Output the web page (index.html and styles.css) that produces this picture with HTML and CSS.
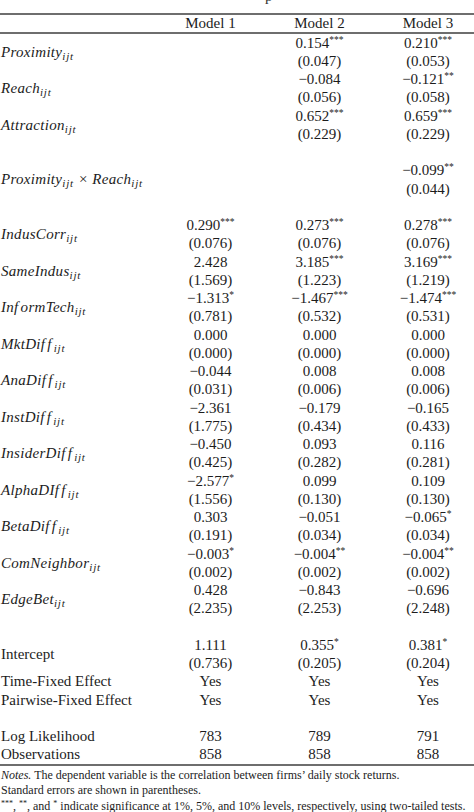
FILE: index.html
```html
<!DOCTYPE html>
<html>
<head>
<meta charset="utf-8">
<link rel="stylesheet" href="styles.css">
</head>
<body>
<div class="page">
  <div class="title"><span class="title-text">p</span></div>
  <div class="rule-thick"></div>
  <div class="row head">
    <div class="lab"></div>
    <div class="val">Model 1</div>
    <div class="val">Model 2</div>
    <div class="val c3">Model 3</div>
  </div>
  <div class="rule-thin"></div>

  <div class="row">
    <div class="lab"><span class="v">Proximity<sub>ijt</sub></span></div>
    <div class="val"><div>&nbsp;</div><div>&nbsp;</div></div>
    <div class="val"><div>0.154<sup>***</sup></div><div>(0.047)</div></div>
    <div class="val c3"><div>0.210<sup>***</sup></div><div>(0.053)</div></div>
  </div>
  <div class="row">
    <div class="lab"><span class="v">Reach<sub>ijt</sub></span></div>
    <div class="val"><div>&nbsp;</div><div>&nbsp;</div></div>
    <div class="val"><div>−0.084</div><div>(0.056)</div></div>
    <div class="val c3"><div>−0.121<sup>**</sup></div><div>(0.058)</div></div>
  </div>
  <div class="row">
    <div class="lab"><span class="v">Attraction<sub>ijt</sub></span></div>
    <div class="val"><div>&nbsp;</div><div>&nbsp;</div></div>
    <div class="val"><div>0.652<sup>***</sup></div><div>(0.229)</div></div>
    <div class="val c3"><div>0.659<sup>***</sup></div><div>(0.229)</div></div>
  </div>
  <div class="gap"></div>
  <div class="row">
    <div class="lab wide"><span class="v">Proximity<sub>ijt</sub></span><span class="times">×</span><span class="v">Reach<sub>ijt</sub></span></div>
    <div class="val"><div>&nbsp;</div><div>&nbsp;</div></div>
    <div class="val"><div>&nbsp;</div><div>&nbsp;</div></div>
    <div class="val c3"><div>−0.099<sup>**</sup></div><div>(0.044)</div></div>
  </div>
  <div class="gap"></div>
  <div class="row">
    <div class="lab"><span class="v">IndusCorr<sub>ijt</sub></span></div>
    <div class="val"><div>0.290<sup>***</sup></div><div>(0.076)</div></div>
    <div class="val"><div>0.273<sup>***</sup></div><div>(0.076)</div></div>
    <div class="val c3"><div>0.278<sup>***</sup></div><div>(0.076)</div></div>
  </div>
  <div class="row">
    <div class="lab"><span class="v">SameIndus<sub>ijt</sub></span></div>
    <div class="val"><div>2.428</div><div>(1.569)</div></div>
    <div class="val"><div>3.185<sup>***</sup></div><div>(1.223)</div></div>
    <div class="val c3"><div>3.169<sup>***</sup></div><div>(1.219)</div></div>
  </div>
  <div class="row">
    <div class="lab"><span class="v">In<span class="fs">f</span>ormTech<sub>ijt</sub></span></div>
    <div class="val"><div>−1.313<sup>*</sup></div><div>(0.781)</div></div>
    <div class="val"><div>−1.467<sup>***</sup></div><div>(0.532)</div></div>
    <div class="val c3"><div>−1.474<sup>***</sup></div><div>(0.531)</div></div>
  </div>
  <div class="row">
    <div class="lab"><span class="v">MktDi<span class="fs">f</span><span class="fs">f</span><sub>ijt</sub></span></div>
    <div class="val"><div>0.000</div><div>(0.000)</div></div>
    <div class="val"><div>0.000</div><div>(0.000)</div></div>
    <div class="val c3"><div>0.000</div><div>(0.000)</div></div>
  </div>
  <div class="row">
    <div class="lab"><span class="v">AnaDi<span class="fs">f</span><span class="fs">f</span><sub>ijt</sub></span></div>
    <div class="val"><div>−0.044</div><div>(0.031)</div></div>
    <div class="val"><div>0.008</div><div>(0.006)</div></div>
    <div class="val c3"><div>0.008</div><div>(0.006)</div></div>
  </div>
  <div class="row">
    <div class="lab"><span class="v">InstDi<span class="fs">f</span><span class="fs">f</span><sub>ijt</sub></span></div>
    <div class="val"><div>−2.361</div><div>(1.775)</div></div>
    <div class="val"><div>−0.179</div><div>(0.434)</div></div>
    <div class="val c3"><div>−0.165</div><div>(0.433)</div></div>
  </div>
  <div class="row">
    <div class="lab"><span class="v">InsiderDi<span class="fs">f</span><span class="fs">f</span><sub>ijt</sub></span></div>
    <div class="val"><div>−0.450</div><div>(0.425)</div></div>
    <div class="val"><div>0.093</div><div>(0.282)</div></div>
    <div class="val c3"><div>0.116</div><div>(0.281)</div></div>
  </div>
  <div class="row">
    <div class="lab"><span class="v">AlphaDI<span class="fs">f</span><span class="fs">f</span><sub>ijt</sub></span></div>
    <div class="val"><div>−2.577<sup>*</sup></div><div>(1.556)</div></div>
    <div class="val"><div>0.099</div><div>(0.130)</div></div>
    <div class="val c3"><div>0.109</div><div>(0.130)</div></div>
  </div>
  <div class="row">
    <div class="lab"><span class="v">BetaDi<span class="fs">f</span><span class="fs">f</span><sub>ijt</sub></span></div>
    <div class="val"><div>0.303</div><div>(0.191)</div></div>
    <div class="val"><div>−0.051</div><div>(0.034)</div></div>
    <div class="val c3"><div>−0.065<sup>*</sup></div><div>(0.034)</div></div>
  </div>
  <div class="row">
    <div class="lab"><span class="v">ComNeighbor<sub>ijt</sub></span></div>
    <div class="val"><div>−0.003<sup>*</sup></div><div>(0.002)</div></div>
    <div class="val"><div>−0.004<sup>**</sup></div><div>(0.002)</div></div>
    <div class="val c3"><div>−0.004<sup>**</sup></div><div>(0.002)</div></div>
  </div>
  <div class="row">
    <div class="lab"><span class="v">EdgeBet<sub>ijt</sub></span></div>
    <div class="val"><div>0.428</div><div>(2.235)</div></div>
    <div class="val"><div>−0.843</div><div>(2.253)</div></div>
    <div class="val c3"><div>−0.696</div><div>(2.248)</div></div>
  </div>
  <div class="gap"></div>
  <div class="row">
    <div class="lab">Intercept</div>
    <div class="val"><div>1.111</div><div>(0.736)</div></div>
    <div class="val"><div>0.355<sup>*</sup></div><div>(0.205)</div></div>
    <div class="val c3"><div>0.381<sup>*</sup></div><div>(0.204)</div></div>
  </div>
  <div class="row">
    <div class="lab">Time-Fixed Effect</div>
    <div class="val">Yes</div>
    <div class="val">Yes</div>
    <div class="val c3">Yes</div>
  </div>
  <div class="row">
    <div class="lab">Pairwise-Fixed Effect</div>
    <div class="val">Yes</div>
    <div class="val">Yes</div>
    <div class="val c3">Yes</div>
  </div>
  <div class="gap"></div>
  <div class="row">
    <div class="lab">Log Likelihood</div>
    <div class="val">783</div>
    <div class="val">789</div>
    <div class="val c3">791</div>
  </div>
  <div class="row">
    <div class="lab">Observations</div>
    <div class="val">858</div>
    <div class="val">858</div>
    <div class="val c3">858</div>
  </div>
  <div class="rule-thick"></div>
  <div class="notes">
    <p><i>Notes.</i> The dependent variable is the correlation between firms’ daily stock returns.</p>
    <p>Standard errors are shown in parentheses.</p>
    <p><sup>***</sup>, <sup>**</sup>, and <sup>*</sup> indicate significance at 1%, 5%, and 10% levels, respectively, using two-tailed tests.</p>
  </div>
</div>
</body>
</html>
```

FILE: styles.css
```css
html, body {
  margin: 0;
  padding: 0;
  background: #ffffff;
}
body {
  font-family: "Liberation Serif", "Times New Roman", serif;
  font-size: 15px;
  color: #1c1c1c;
  overflow: hidden;
}
.page {
  width: 474px;
}
.title {
  height: 13px;
  overflow: hidden;
  line-height: 16px;
}
.title-text {
  display: block;
  margin-top: -12px;
  padding-left: 265px;
  color: #333;
}
.rule-thick {
  height: 2px;
  background: #6e6e6e;
}
.rule-thin {
  height: 1.5px;
  background: #6e6e6e;
}
.row {
  display: grid;
  grid-template-columns: 156px 109px 109px 1fr;
  line-height: 18.25px;
}
.head {
  line-height: 17px;
}
.lab {
  display: flex;
  align-items: center;
  padding-left: 1px;
  white-space: nowrap;
}
.val {
  text-align: center;
  white-space: nowrap;
}
.c3 {
  padding-left: 8px;
}
.gap {
  height: 18.25px;
}
.v {
  font-style: italic;
  letter-spacing: 0.3px;
}
.fs {
  margin-right: 2px;
}
.times {
  margin: 0 5px;
}
sub {
  font-size: 11px;
  line-height: 0;
  vertical-align: -3px;
  font-style: italic;
  letter-spacing: 0.8px;
}
sup {
  font-size: 9.5px;
  line-height: 0;
  vertical-align: 5px;
}
.notes {
  font-size: 12px;
  line-height: 15.5px;
  padding-top: 2px;
  padding-left: 1px;
}
.notes p {
  margin: 0;
  white-space: nowrap;
}
.notes sup {
  font-size: 8px;
  vertical-align: 4px;
}
```
